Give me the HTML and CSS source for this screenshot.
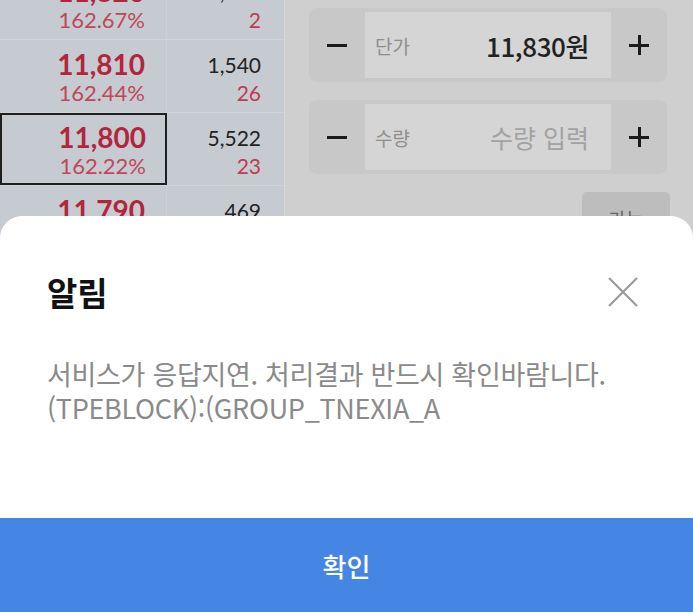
FILE: index.html
```html
<!DOCTYPE html>
<html lang="ko">
<head>
<meta charset="utf-8">
<title>알림</title>
<link rel="stylesheet" href="styles.css">
</head>
<body>
<div class="page">
  <div class="book">
    <div class="row">
      <div class="price-cell"><div class="price">11,820</div><div class="pct">162.67%</div></div>
      <div class="qty-cell"><div class="qty">1,490</div><div class="sub">2</div></div>
    </div>
    <div class="row">
      <div class="price-cell"><div class="price">11,810</div><div class="pct">162.44%</div></div>
      <div class="qty-cell"><div class="qty">1,540</div><div class="sub">26</div></div>
    </div>
    <div class="row">
      <div class="price-cell selected"><div class="price">11,800</div><div class="pct">162.22%</div></div>
      <div class="qty-cell"><div class="qty">5,522</div><div class="sub">23</div></div>
    </div>
    <div class="row">
      <div class="price-cell"><div class="price">11,790</div><div class="pct">161.99%</div></div>
      <div class="qty-cell"><div class="qty">469</div><div class="sub">5</div></div>
    </div>
  </div>
  <div class="order">
    <div class="stepper">
      <div class="step-btn"><span class="minus"></span></div>
      <div class="field"><span class="label">단가</span><span class="value">11,830원</span></div>
      <div class="step-btn"><span class="plus"></span></div>
    </div>
    <div class="stepper">
      <div class="step-btn"><span class="minus"></span></div>
      <div class="field"><span class="label">수량</span><span class="placeholder">수량 입력</span></div>
      <div class="step-btn"><span class="plus"></span></div>
    </div>
    <div class="avail">가능</div>
  </div>

  <div class="modal">
    <div class="modal-head">
      <h2 class="modal-title">알림</h2>
      <svg class="close" width="30" height="30" viewBox="0 0 30 30"><path d="M1 1 L29 29 M29 1 L1 29" stroke="#9a9a9a" stroke-width="2.2" fill="none"/></svg>
    </div>
    <p class="modal-body">서비스가 응답지연. 처리결과 반드시 확인바람니다.<br>(TPEBLOCK):(GROUP_TNEXIA_A</p>
    <div class="spacer"></div>
    <div class="confirm">확인</div>
  </div>
</div>
</body>
</html>
```
FILE: styles.css
```css
html, body {
  margin: 0;
  padding: 0;
}
body {
  font-family: "Noto Sans CJK KR", "Noto Sans", sans-serif;
  background: #cfcfcf;
}
.page {
  position: relative;
  width: 693px;
  height: 614px;
  overflow: hidden;
  display: flex;
  background: #cfcfcf;
}
.book {
  width: 284px;
  background: #c6cbd2;
  border-right: 1px solid #d3d6da;
  margin-top: -33px;
  display: flex;
  flex-direction: column;
  flex-shrink: 0;
}
.row {
  display: flex;
  height: 72px;
  border-bottom: 1px solid #d0d3d8;
  font-family: Lato, "Liberation Sans", sans-serif;
}
.price-cell {
  width: 167px;
  box-sizing: border-box;
  border-right: 1px solid #cdd0d5;
  padding: 9px 21px 0 0;
  text-align: right;
}
.price-cell.selected {
  border: 2px solid #1e1e1e;
  padding: 7px 19px 0 0;
  width: 167px;
}
.price {
  font-size: 28px;
  font-weight: 700;
  color: #b3253d;
  line-height: 30px;
}
.pct {
  font-size: 22px;
  color: #c0475a;
  line-height: 28px;
}
.qty-cell {
  flex: 1;
  text-align: right;
  padding: 11px 23px 0 0;
}
.qty {
  font-size: 21px;
  color: #222;
  line-height: 28px;
}
.sub {
  font-size: 21px;
  color: #bf3b52;
  line-height: 28px;
}
.order {
  flex: 1;
  display: flex;
  flex-direction: column;
  padding: 8px 26px 0 24px;
}
.stepper {
  display: flex;
  height: 74px;
  box-sizing: border-box;
  padding: 4px 0;
  background: #c8c8c8;
  border-radius: 8px;
  margin-bottom: 18px;
}
.step-btn {
  width: 56px;
  display: flex;
  align-items: center;
  justify-content: center;
}
.minus {
  display: block;
  width: 20px;
  height: 3px;
  background: #1b1b1b;
}
.plus {
  position: relative;
  display: block;
  width: 20px;
  height: 20px;
}
.plus::before, .plus::after {
  content: "";
  position: absolute;
  background: #1b1b1b;
}
.plus::before {
  left: 0; right: 0; top: 9px; height: 3px;
}
.plus::after {
  top: 0; bottom: 0; left: 9px; width: 3px;
}
.field {
  flex: 1;
  background: #d5d5d5;
  display: flex;
  align-items: center;
  justify-content: space-between;
  padding: 0 22px 0 10px;
}
.label {
  font-size: 19px;
  color: #8e8e8e;
}
.value {
  font-size: 26px;
  font-weight: 500;
  color: #222;
  letter-spacing: -0.4px;
}
.placeholder {
  font-size: 25px;
  color: #a2a2a2;
}
.avail {
  align-self: flex-end;
  margin-right: -3px;
  width: 88px;
  height: 40px;
  background: #bdbdbd;
  border-radius: 5px;
  text-align: center;
  font-size: 19px;
  line-height: 54px;
  color: #666;
  overflow: hidden;
}
.modal {
  position: absolute;
  top: 216px;
  left: 0;
  right: 0;
  bottom: 0;
  background: #fff;
  border-radius: 22px 22px 0 0;
  display: flex;
  flex-direction: column;
  padding-bottom: 2px;
}
.modal-head {
  display: flex;
  align-items: center;
  justify-content: space-between;
  padding: 56px 55px 0 47px;
  height: 40px;
}
.modal-title {
  margin: 0;
  font-size: 33px;
  font-weight: 700;
  color: #111;
  line-height: 40px;
}
.modal-body {
  margin: 45px 0 0;
  padding: 0 30px 0 47px;
  font-size: 27px;
  line-height: 34px;
  color: #8a8a8a;
  letter-spacing: -0.3px;
  white-space: nowrap;
}
.spacer {
  flex: 1;
}
.confirm {
  height: 94px;
  background: #4585e3;
  color: #fff;
  font-size: 26px;
  font-weight: 500;
  display: flex;
  align-items: center;
  justify-content: center;
}
```
